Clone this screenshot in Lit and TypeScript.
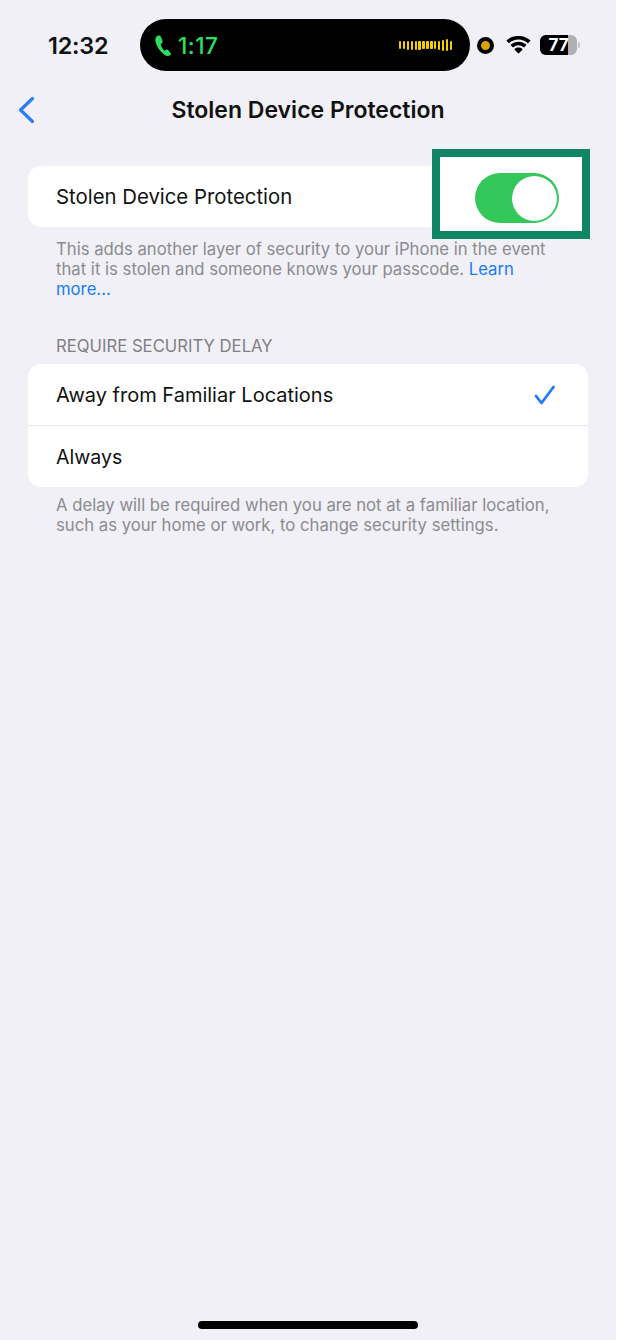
import { LitElement, html, css, svg } from "lit";
import { customElement } from "lit/decorators.js";

const bars = [8, 8, 9, 9, 9, 9, 8, 8, 8, 8, 9, 11, 12, 9];

@customElement("app-root")
export class AppRoot extends LitElement {
  static styles = css`
    :host { display: block; width: 620px; height: 1340px; background: #fff; font-family: Inter, "Liberation Sans", sans-serif; }
    .page { position: relative; width: 616px; height: 1340px; background: #f0f0f6; display: flex; flex-direction: column; overflow: hidden; }
    .status { display: flex; align-items: center; height: 52px; margin-top: 19px; padding-left: 48px; }
    .time { width: 92px; font-size: 23.4px; font-weight: 600; color: #111; letter-spacing: -0.2px; }
    .pill { width: 330px; height: 52px; border-radius: 26px; background: #000; display: flex; align-items: center; padding: 0 18px 0 15px; box-sizing: border-box; }
    .call { display: block; margin-right: 7px; }
    .dur { font-size: 22.5px; font-weight: 500; letter-spacing: 0.5px; color: #2be05f; flex: 1; }
    .wave { display: flex; align-items: center; gap: 1.5px; }
    .wave i { display: block; width: 2.4px; background: #f5d000; border-radius: 1px; }
    .dot { width: 17px; height: 17px; box-sizing: border-box; border: 4.500px solid #000; border-radius: 50%; background: #d9a400; margin-left: 7px; }
    .wifi { display: block; margin-left: 12px; }
    .batt { display: flex; align-items: center; margin-left: 9px; }
    .batt-body { width: 37px; height: 20px; border-radius: 6px; overflow: hidden; position: relative; background: #b0b0b4; }
    .batt-fill { position: absolute; left: 0; top: 0; bottom: 0; width: 28px; background: #000; }
    .batt-num { position: relative; display: block; text-align: center; font-size: 17px; font-weight: 700; line-height: 20px; color: #fff; }
    .batt-cap { width: 2px; height: 6px; background: #c4c4c8; border-radius: 0 2px 2px 0; margin-left: 1px; }
    .nav { position: relative; height: 40px; margin-top: 19px; display: flex; align-items: center; justify-content: center; }
    .back { position: absolute; left: 16.5px; top: 6px; display: block; }
    .title { font-size: 23px; font-weight: 600; color: #111; }
    .content { padding: 36px 28px 0; display: flex; flex-direction: column; }
    .card { background: #fff; border-radius: 13px; }
    .row { height: 61px; display: flex; align-items: center; justify-content: space-between; padding: 0 33px 0 28px; font-size: 20px; color: #111; }
    .row.wide { font-size: 20.35px; }
    .row.narrow { font-size: 19.6px; }
    .sep { height: 1px; background: #e6e6ea; }
    .note { margin: 12px 0 0; padding: 0 28px; font-size: 16.7px; line-height: 20px; color: #8b8b90; }
    .note.tight { margin-top: 9px; line-height: 19.5px; }
    .note a { color: #1a7cf5; }
    .head { margin: 37px 0 8px; padding: 0 28px; font-size: 16.7px; line-height: 20px; color: #808085; }
    .highlight { position: absolute; left: 432px; top: 149px; width: 158px; height: 90px; box-sizing: border-box; border: 8px solid #0f8563; background: #fff; }
    .toggle { position: absolute; left: 35px; top: 16px; width: 84px; height: 50px; border-radius: 25px; background: #34c759; }
    .knob { position: absolute; right: 2.500px; top: 2.500px; width: 45px; height: 45px; border-radius: 50%; background: #fff; }
    .home { position: absolute; left: 198px; top: 1321px; width: 220px; height: 8px; border-radius: 4px; background: #000; }
  `;

  render() {
    return html`<div class="page">
      <div class="status">
        <div class="time">12:32</div>
        <div class="pill">
          <svg class="call" width="16" height="21" viewBox="0 0 16 21"><path fill="#2be05f" d="M3 .5C4.500.2 5.500.6 6 2l1.500 4c.4 1.200 0 2-1 2.700l-1 .7c1 2.600 2.300 4.600 4 6.400l1.300-.8c.9-.6 1.800-.5 2.500.3l2.200 2.700c.7 1 .5 1.800-.5 2.300-1.500.9-3.500.9-5.200-.3C5 16.500 1.500 11.500.4 6 0 3.500 1 1.200 3 .5Z"/></svg>
          <div class="dur">1:17</div>
          <div class="wave">${bars.map((h) => html`<i style="height:${h}px"></i>`)}</div>
        </div>
        <div class="dot"></div>
        <svg class="wifi" width="25" height="19" viewBox="0 0 26 19">${svg`<path fill="#000" d="M13 3.200c3.700 0 7 1.400 9.500 3.700.2.200.5.200.7 0l2-2c.2-.2.200-.6 0-.8C22 1.100 17.700-.5 13-.5S4 1.100.8 4.100c-.2.200-.2.600 0 .8l2 2c.2.200.5.200.7 0C6 4.600 9.300 3.200 13 3.200Z"/><path fill="#000" d="M13 9.300c2 0 3.900.8 5.300 2 .2.200.5.200.7 0l2-2c.2-.2.200-.6 0-.8-2.200-1.900-5-3-8-3s-5.800 1.100-8 3c-.2.200-.2.600 0 .8l2 2c.2.200.5.200.7 0 1.400-1.200 3.300-2 5.300-2Z"/><path fill="#000" d="M17 13.100c.2.200.2.600 0 .8l-3.600 3.700c-.2.200-.6.200-.8 0L9 13.900c-.2-.2-.2-.6 0-.8 1.100-.9 2.500-1.400 4-1.400s2.900.5 4 1.400Z"/>`}</svg>
        <div class="batt">
          <div class="batt-body"><div class="batt-fill"></div><span class="batt-num">77</span></div>
          <div class="batt-cap"></div>
        </div>
      </div>
      <div class="nav">
        <svg class="back" width="20" height="28" viewBox="0 0 20 28"><path d="M15.500 2.500 3.500 14l12 11.500" fill="none" stroke="#2a7ff5" stroke-width="3.200" stroke-linecap="round" stroke-linejoin="round"/></svg>
        <div class="title">Stolen Device Protection</div>
      </div>
      <div class="content">
        <div class="card"><div class="row wide">Stolen Device Protection</div></div>
        <p class="note">This adds another layer of security to your iPhone in the event that it is stolen and someone knows your passcode. <a>Learn</a> <a>more...</a></p>
        <div class="head">REQUIRE SECURITY DELAY</div>
        <div class="card">
          <div class="row">Away from Familiar Locations
            <svg width="22" height="20" viewBox="0 0 22 20"><path d="M3 11 8.500 18 20.500 2" fill="none" stroke="#1f7cf5" stroke-width="2.800" stroke-linecap="round" stroke-linejoin="round"/></svg>
          </div>
          <div class="sep"></div>
          <div class="row narrow">Always</div>
        </div>
        <p class="note tight">A delay will be required when you are not at a familiar location, such as your home or work, to change security settings.</p>
      </div>
      <div class="highlight"><div class="toggle"><div class="knob"></div></div></div>
      <div class="home"></div>
    </div>`;
  }
}
